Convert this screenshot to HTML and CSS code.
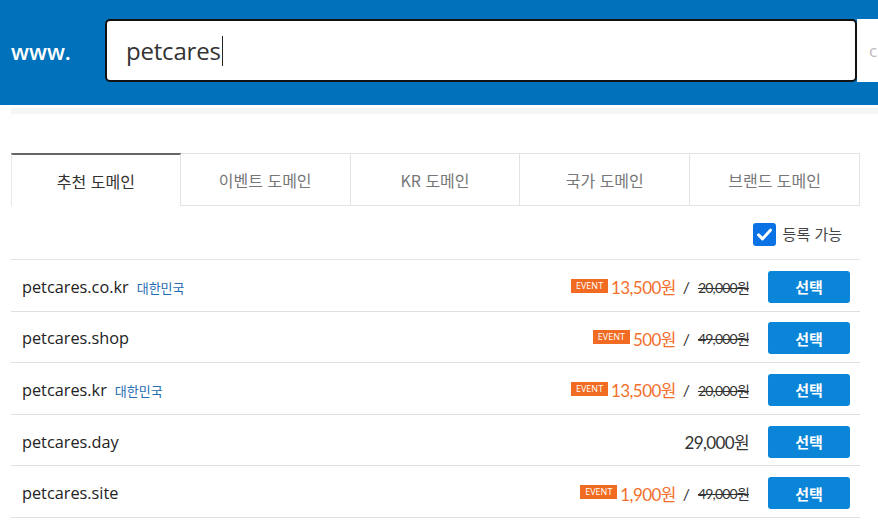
FILE: index.html
```html
<!DOCTYPE html>
<html lang="ko">
<head>
<meta charset="utf-8">
<link rel="stylesheet" href="styles.css">
</head>
<body>
<header class="search-bar">
  <span class="prefix">www.</span>
  <div class="input-box"><span class="query">petcares</span><span class="caret"></span></div>
  <div class="tld-box"><span class="tld">c</span></div>
</header>
<div class="shade"></div>
<main class="content">
  <nav class="tabs">
    <div class="tab active">추천 도메인</div>
    <div class="tab">이벤트 도메인</div>
    <div class="tab">KR 도메인</div>
    <div class="tab">국가 도메인</div>
    <div class="tab">브랜드 도메인</div>
  </nav>
  <div class="filter">
    <label class="check"><span class="box"><svg viewBox="0 0 24 24" width="19" height="19"><path d="M4.5 12.5 L9.5 17.5 L19.5 6.5" fill="none" stroke="#fff" stroke-width="3.8" stroke-linecap="round" stroke-linejoin="round"/></svg></span><span class="check-label">등록 가능</span></label>
  </div>
  <ul class="list">
    <li class="row">
      <div class="name">petcares.co.kr <span class="tag">대한민국</span></div>
      <div class="price"><span class="event">EVENT</span><span class="sale">13,500원</span><span class="slash">/</span><del class="orig">20,000원</del></div>
      <button class="select">선택</button>
    </li>
    <li class="row">
      <div class="name">petcares.shop</div>
      <div class="price"><span class="event">EVENT</span><span class="sale">500원</span><span class="slash">/</span><del class="orig">49,000원</del></div>
      <button class="select">선택</button>
    </li>
    <li class="row">
      <div class="name">petcares.kr <span class="tag">대한민국</span></div>
      <div class="price"><span class="event">EVENT</span><span class="sale">13,500원</span><span class="slash">/</span><del class="orig">20,000원</del></div>
      <button class="select">선택</button>
    </li>
    <li class="row">
      <div class="name">petcares.day</div>
      <div class="price"><span class="plain">29,000원</span></div>
      <button class="select">선택</button>
    </li>
    <li class="row">
      <div class="name">petcares.site</div>
      <div class="price"><span class="event">EVENT</span><span class="sale">1,900원</span><span class="slash">/</span><del class="orig">49,000원</del></div>
      <button class="select">선택</button>
    </li>
  </ul>
</main>
</body>
</html>
```
FILE: styles.css
```css
* { box-sizing: border-box; }
html, body { margin: 0; padding: 0; background: #fff; }
body {
  width: 878px;
  height: 522px;
  overflow: hidden;
  font-family: "Noto Sans", "Noto Sans CJK KR", sans-serif;
  color: #222;
}
.search-bar {
  height: 105px;
  background: #0071bb;
  display: flex;
  align-items: center;
  padding-left: 11px;
}
.prefix {
  color: #fff;
  font-family: "Open Sans", sans-serif;
  font-size: 22px;
  font-weight: 600;
  width: 94px;
  margin-top: -4px;
}
.input-box {
  width: 752px;
  height: 63px;
  margin-top: -4px;
  background: #fff;
  border: 2px solid #111;
  border-radius: 5px;
  display: flex;
  align-items: center;
  padding-left: 19px;
}
.query {
  font-family: "Open Sans", sans-serif;
  font-size: 24px;
  color: #333;
  letter-spacing: -0.2px;
}
.caret {
  display: inline-block;
  width: 1px;
  height: 30px;
  background: #222;
  margin-left: 1px;
}
.tld-box {
  flex: 1;
  height: 63px;
  margin-top: -4px;
  background: #fff;
  display: flex;
  align-items: center;
  padding-left: 12px;
}
.tld {
  font-family: "Open Sans", sans-serif;
  font-size: 17px;
  color: #bbb;
}
.shade {
  height: 6px;
  margin: 3px 0 0 11px;
  background: #f4f5f5;
}
.content {
  padding: 39px 18px 0 11px;
}
.tabs {
  display: grid;
  grid-template-columns: repeat(5, 1fr);
  height: 53px;
}
.tab {
  display: flex;
  align-items: center;
  justify-content: center;
  font-family: "Noto Sans CJK KR", sans-serif;
  font-size: 16px;
  color: #777;
  border-top: 1px solid #e3e3e3;
  border-bottom: 1px solid #e3e3e3;
  border-right: 1px solid #e3e3e3;
  padding-top: 1px;
}
.tab.active {
  color: #333;
  border-top: 2px solid #666;
  border-left: 1px solid #e8e8e8;
  border-bottom: none;
  padding-top: 0;
}
.filter {
  height: 53px;
  display: flex;
  justify-content: flex-end;
  align-items: center;
  padding-right: 18px;
  padding-top: 3px;
}
.check {
  display: flex;
  align-items: center;
  gap: 7px;
}
.box {
  width: 23px;
  height: 23px;
  border-radius: 3px;
  background: #0b72e6;
  display: flex;
  align-items: center;
  justify-content: center;
}
.check-label {
  font-family: "Noto Sans CJK KR", sans-serif;
  font-size: 15px;
  color: #444;
  margin-top: -2px;
}
.list {
  list-style: none;
  margin: 0;
  padding: 0;
  border-top: 1px solid #e4e4e4;
}
.row {
  height: 51.6px;
  border-bottom: 1px solid #e0e0e0;
  display: flex;
  align-items: center;
  padding: 3px 10px 0 11px;
}
.name {
  flex: 1;
  font-family: "Open Sans", sans-serif;
  font-size: 16.3px;
  color: #222;
  display: flex;
  align-items: center;
}
.tag {
  font-family: "Noto Sans CJK KR", sans-serif;
  font-size: 13px;
  color: #1f6db3;
  margin-left: 8px;
  margin-top: 1px;
}
.price {
  display: flex;
  align-items: center;
  margin-right: 19px;
  font-family: Lato, "Noto Sans CJK KR", sans-serif;
}
.event {
  background: #f26b22;
  color: #fff;
  font-family: "Open Sans", sans-serif;
  font-size: 9px;
  height: 14px;
  line-height: 14px;
  padding: 0 5px;
  margin-right: 3px;
  margin-top: -2px;
}
.sale {
  color: #f26f2c;
  font-size: 17px;
  letter-spacing: -0.6px;
}
.slash {
  color: #333;
  font-size: 16px;
  margin: 0 8px 0 7px;
}
.orig {
  color: #333;
  font-size: 14px;
  letter-spacing: -0.8px;
}
.plain {
  color: #333;
  font-size: 17px;
  letter-spacing: -0.6px;
}
.select {
  width: 82px;
  height: 32px;
  border: none;
  border-radius: 3px;
  background: #0b85d8;
  color: #fff;
  font-family: "Noto Sans CJK KR", sans-serif;
  font-size: 15px;
  font-weight: 700;
  padding: 0;
}
```
